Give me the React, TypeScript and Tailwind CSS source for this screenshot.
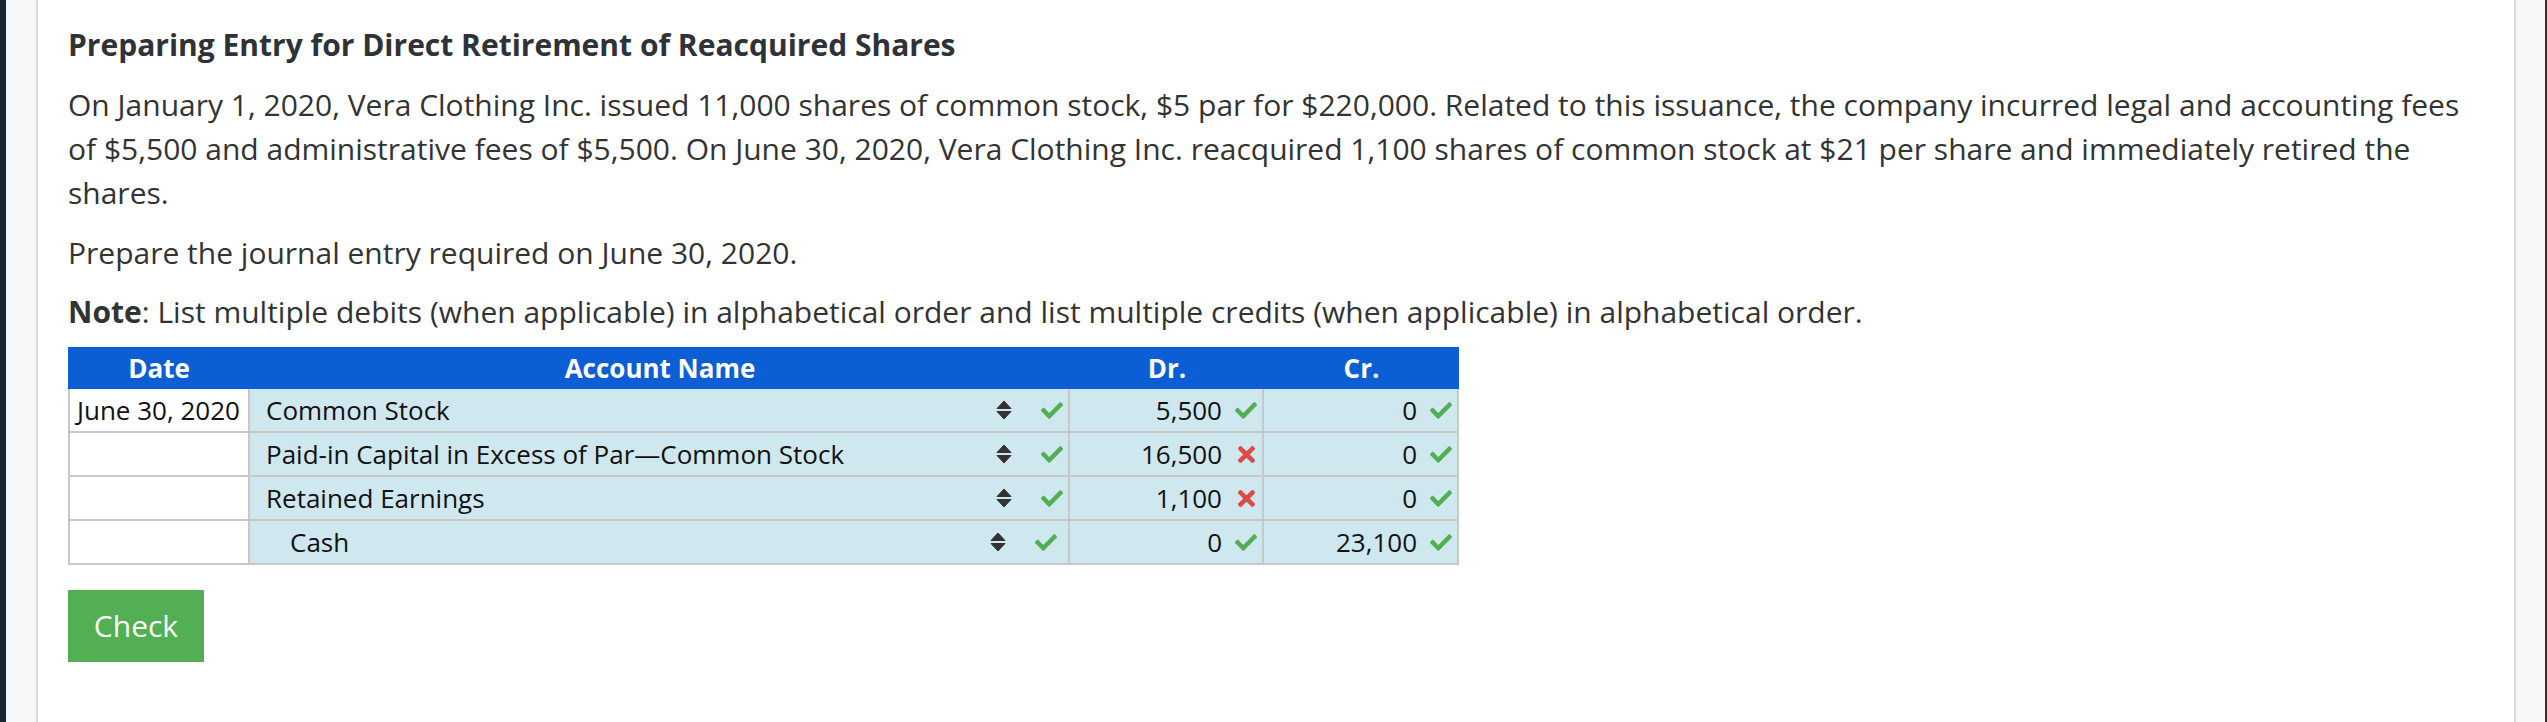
import React from "react";

const CheckMark = () => (
  <svg viewBox="0 64 512 384" className="w-[22px] h-[17px] shrink-0" fill="#52ae52">
    <path d="M173.898 439.404l-166.4-166.4c-9.997-9.997-9.997-26.206 0-36.204l36.203-36.204c9.997-9.998 26.207-9.998 36.204 0L192 312.69 432.095 72.596c9.997-9.997 26.207-9.997 36.204 0l36.203 36.204c9.997 9.997 9.997 26.206 0 36.204l-294.4 294.401c-9.998 9.997-26.207 9.997-36.204-.001z" />
  </svg>
);

const CrossMark = () => (
  <span className="w-[22px] flex justify-center shrink-0">
    <svg viewBox="0 80 352 352" className="w-[17px] h-[17px]" fill="#dc4b45">
      <path d="M242.72 256l100.07-100.07c12.280-12.28 12.28-32.19 0-44.48l-22.24-22.24c-12.28-12.28-32.19-12.28-44.48 0L176 189.28 75.93 89.21c-12.28-12.28-32.19-12.28-44.48 0L9.21 111.45c-12.28 12.28-12.28 32.19 0 44.48L109.28 256 9.21 356.07c-12.28 12.28-12.28 32.19 0 44.48l22.24 22.24c12.28 12.28 32.2 12.28 44.48 0L176 322.72l100.07 100.07c12.28 12.28 32.2 12.28 44.48 0l22.24-22.24c12.28-12.28 12.28-32.19 0-44.48L242.72 256z" />
    </svg>
  </span>
);

const SortIcon = () => (
  <svg viewBox="0 0 16 20" className="w-[16px] h-[20px] shrink-0" fill="#333">
    <path d="M1 8.5 L8 1 L15 8.5 Z" strokeLinejoin="round" stroke="#333" strokeWidth="1" />
    <path d="M1 11.5 L15 11.5 L8 19 Z" strokeLinejoin="round" stroke="#333" strokeWidth="1" />
  </svg>
);

type Row = {
  date: string;
  account: string;
  indent?: boolean;
  dr: string;
  drOk: boolean;
  cr: string;
  crOk: boolean;
};

const rows: Row[] = [
  { date: "June 30, 2020", account: "Common Stock", dr: "5,500", drOk: true, cr: "0", crOk: true },
  { date: "", account: "Paid-in Capital in Excess of Par\u2014Common Stock", dr: "16,500", drOk: false, cr: "0", crOk: true },
  { date: "", account: "Retained Earnings", dr: "1,100", drOk: false, cr: "0", crOk: true },
  { date: "", account: "Cash", indent: true, dr: "0", drOk: true, cr: "23,100", crOk: true },
];

const JournalTable = () => (
  <div className="mt-[13px] w-[1391px] text-[26px] leading-normal text-[#111]">
    <div className="grid grid-cols-[182px_820px_194px_195px] h-[42px] bg-[#0b5ed4] text-white font-bold items-center text-center">
      <div>Date</div>
      <div>Account Name</div>
      <div>Dr.</div>
      <div>Cr.</div>
    </div>
    {rows.map((row, i) => (
      <div key={i} className="grid grid-cols-[182px_820px_194px_195px] h-[44px]">
        <div className="bg-white border-l-2 border-r-2 border-b-2 border-[#c8c8c8] pl-[7px] flex items-center whitespace-nowrap">
          {row.date}
        </div>
        <div className="bg-[#cfe7ee] border-r-2 border-b-2 border-[#c8c8c8] flex items-center pr-[5px]">
          <span className={row.indent ? "pl-[40px] flex-1" : "pl-[16px] flex-1"}>{row.account}</span>
          <SortIcon />
          <span className="w-[29px] shrink-0" />
          <span className={row.indent ? "mr-[6px] flex" : "flex"}>
            <CheckMark />
          </span>
        </div>
        <div className="bg-[#cfe7ee] border-r-2 border-b-2 border-[#c8c8c8] flex items-center justify-end pr-[5px] gap-[13px]">
          <span>{row.dr}</span>
          {row.drOk ? <CheckMark /> : <CrossMark />}
        </div>
        <div className="bg-[#cfe7ee] border-r-2 border-b-2 border-[#c8c8c8] flex items-center justify-end pr-[5px] gap-[13px]">
          <span>{row.cr}</span>
          {row.crOk ? <CheckMark /> : <CrossMark />}
        </div>
      </div>
    ))}
  </div>
);

export default function App() {
  return (
    <div
      className="flex h-[722px] w-[2547px] overflow-hidden"
      style={{ fontFamily: '"Open Sans", "Liberation Sans", sans-serif' }}
    >
      <div className="w-[6px] bg-[#1c2633]" />
      <div className="w-[32px] bg-[#f6f7f9] border-r-2 border-[#dcdcdc]" />
      <main className="flex-1 bg-white pt-[23px] pl-[30px] pr-[30px] text-[#333] text-[30px] leading-[44px]">
        <h2 className="font-bold text-[30px] leading-[44px] text-[#2f3237]">
          Preparing Entry for Direct Retirement of Reacquired Shares
        </h2>
        <p className="mt-[16px]">
          On January 1, 2020, Vera Clothing Inc. issued 11,000 shares of common stock, $5 par for $220,000. Related to
          this issuance, the company incurred legal and accounting fees of $5,500 and administrative fees of $5,500. On
          June 30, 2020, Vera Clothing Inc. reacquired 1,100 shares of common stock at $21 per share and immediately
          retired the shares.
        </p>
        <p className="mt-[16px]">Prepare the journal entry required on June 30, 2020.</p>
        <p className="mt-[15px]">
          <span className="font-bold">Note</span>: List multiple debits (when applicable) in alphabetical order and list
          multiple credits (when applicable) in alphabetical order.
        </p>
        <JournalTable />
        <button className="mt-[25px] w-[136px] h-[72px] bg-[#53af53] text-white text-[30px] flex items-center justify-center">
          Check
        </button>
      </main>
      <div className="w-[31px] bg-[#f6f7f9] border-l-2 border-[#dcdcdc]" />
      <div className="w-[2px] bg-[#3a2e2a]" />
    </div>
  );
}
